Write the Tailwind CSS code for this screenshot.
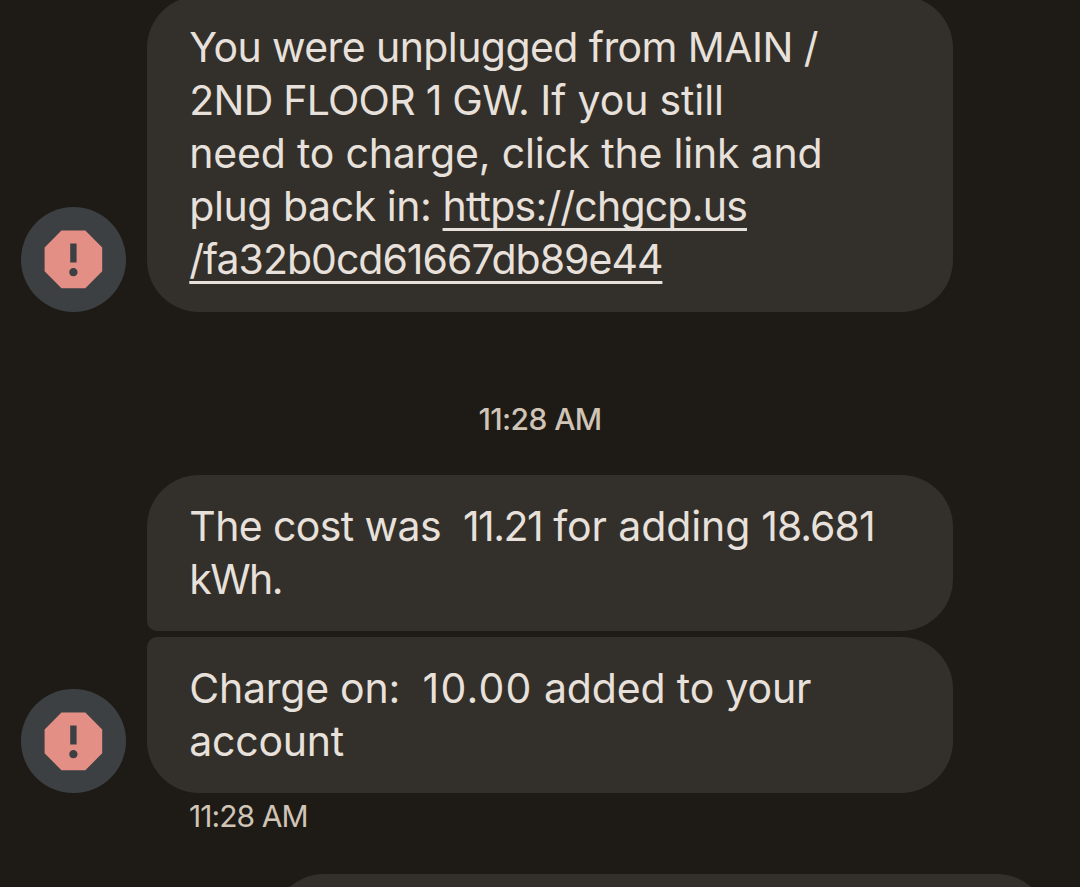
<!DOCTYPE html>
<html lang="en">
  <head>
    <meta charset="UTF-8" />
    <meta name="viewport" content="width=device-width, initial-scale=1.0" />
    <title>Messages</title>
    <script src="https://cdn.jsdelivr.net/npm/@tailwindcss/browser@4"></script>
  </head>
  <body class="h-screen overflow-hidden bg-[#1e1b16] font-['Inter',sans-serif] text-[#e8e1db]">
    <main class="flex h-[887px] w-[1080px] flex-col overflow-hidden">
      <!-- Unplugged notice, scrolled partly off the top -->
      <section class="-mt-[3.67px] flex shrink-0 items-end pl-[21.3px]">
        <div
          class="flex size-[104.7px] shrink-0 items-center justify-center rounded-full bg-[#3c4043]"
        >
          <svg class="size-[76.8px] text-[#e48f86]" viewBox="0 0 24 24" fill="currentColor">
            <path
              d="M15.73 3H8.27L3 8.27v7.46L8.27 21h7.46L21 15.73V8.27L15.73 3zM12 17.3c-.72 0-1.3-.58-1.3-1.3s.58-1.3 1.3-1.3 1.3.58 1.3 1.3-.58 1.3-1.3 1.3zm1-4.3h-2V7h2v6z"
            />
          </svg>
        </div>
        <div
          class="ml-[21.3px] w-[806px] rounded-[52px] bg-[#332f2a] px-[42px] pt-[24.3px] pb-[26.4px] text-[41px] leading-[53px] whitespace-nowrap"
        >
          <p class="tracking-[-0.58px]">You were unplugged from MAIN /</p>
          <p class="tracking-[-0.15px]">
            <span class="tracking-[-0.75px]">2ND FLOOR 1 GW.</span> If you still
          </p>
          <p class="tracking-[-0.2px]">need to charge, click the link and</p>
          <p class="tracking-[-0.44px]">
            plug back in:
            <a
              href="#"
              class="tracking-[-0.8px] underline decoration-3 underline-offset-7 [text-decoration-skip-ink:none]"
              >https://chgcp.us</a
            >
          </p>
          <p class="tracking-[-1px]">
            <a
              href="#"
              class="underline decoration-3 underline-offset-7 [text-decoration-skip-ink:none]"
              >/fa32b0cd61667db89e44</a
            >
          </p>
        </div>
      </section>

      <div
        class="h-[162.67px] shrink-0 pt-[87px] text-center text-[30px] leading-10 font-medium tracking-[-0.6px] text-[#d0c4b7]"
      >
        11:28 AM
      </div>

      <!-- Cost and charge messages share one avatar -->
      <section class="flex shrink-0 items-end pl-[21.3px]">
        <div
          class="flex size-[104.7px] shrink-0 items-center justify-center rounded-full bg-[#3c4043]"
        >
          <svg class="size-[76.8px] text-[#e48f86]" viewBox="0 0 24 24" fill="currentColor">
            <path
              d="M15.73 3H8.27L3 8.27v7.46L8.27 21h7.46L21 15.73V8.27L15.73 3zM12 17.3c-.72 0-1.3-.58-1.3-1.3s.58-1.3 1.3-1.3 1.3.58 1.3 1.3-.58 1.3-1.3 1.3zm1-4.3h-2V7h2v6z"
            />
          </svg>
        </div>
        <div
          class="ml-[21.3px] flex w-[806px] flex-col gap-[5.3px] text-[41px] leading-[53px] whitespace-nowrap"
        >
          <div
            class="rounded-[52px] rounded-bl-[10px] bg-[#332f2a] px-[42px] pt-[25.3px] pb-[25.4px]"
          >
            <p class="tracking-[-0.6px]">
              The cost was&nbsp; <span class="tracking-[-1.5px]">11.21</span>
              <span class="tracking-[-0.1px]">for adding</span>
              <span class="tracking-[-1px]">18.681</span>
            </p>
            <p class="tracking-[-1.6px]">kWh.</p>
          </div>
          <div
            class="rounded-[52px] rounded-tl-[10px] bg-[#332f2a] px-[42px] pt-[25.3px] pb-[25.4px]"
          >
            <p class="tracking-[-0.15px]">
              <span class="tracking-[-0.25px]">Charge on:&nbsp; </span
              ><span class="tracking-[1.2px]">10.00</span> added to your
            </p>
            <p class="tracking-[-0.25px]">account</p>
          </div>
        </div>
      </section>

      <p
        class="shrink-0 pt-[3px] pl-[189px] text-[30px] leading-10 tracking-[-0.95px] text-[#d0c4b7]"
      >
        11:28 AM
      </p>

      <!-- Next message, cut off by the bottom edge -->
      <div class="mt-[37.5px] ml-[272px] h-[156px] w-[777px] shrink-0 rounded-[52px] bg-[#332f2a]"></div>
    </main>
  </body>
</html>
